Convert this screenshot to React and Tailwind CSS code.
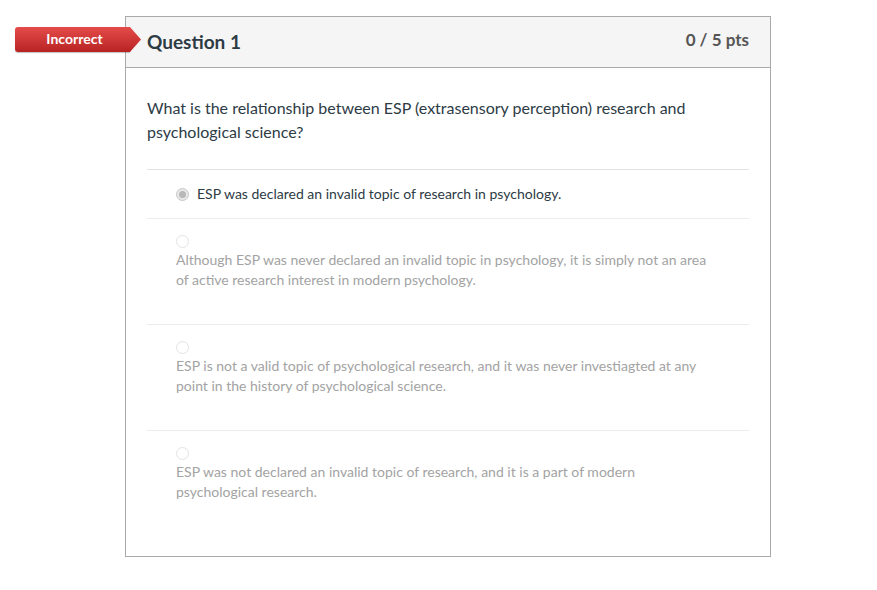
import React from 'react';

const answers = [
    'Although ESP was never declared an invalid topic in psychology, it is simply not an area of active research interest in modern psychology.',
    'ESP is not a valid topic of psychological research, and it was never investiagted at any point in the history of psychological science.',
    'ESP was not declared an invalid topic of research, and it is a part of modern psychological research.',
];

const Radio = ({ checked }) => (
    <span
        className={`flex w-[13px] h-[13px] rounded-full border shrink-0 items-center justify-center ${checked ? 'border-[#c8c8c8] bg-[#e8e8e8]' : 'border-[#e3e3e3] bg-white'}`}
    >
        {checked && <span className="block w-[7px] h-[7px] rounded-full bg-[#b8b8b8]" />}
    </span>
);

const App = () => {
    return (
        <div className="min-h-[590px] bg-white pt-[16px] pl-[125px]" style={{ fontFamily: 'Lato, "Noto Sans", sans-serif' }}>
            <div className="relative w-[646px] h-[541px] border border-[#aaaaaa]">
                {/* Incorrect badge */}
                <div className="absolute left-[-111px] top-[10px] flex items-center">
                    <div className="w-[115px] h-[25px] rounded-l-[3px] bg-gradient-to-b from-[#e54b4b] to-[#b82222] flex items-center justify-center text-white text-[14px] leading-[18px] pb-[2px] pl-[4px] font-bold shadow-[0_1px_1px_rgba(0,0,0,0.25)]">
                        Incorrect
                    </div>
                    <svg width="11" height="25" viewBox="0 0 11 25" className="block">
                        <defs>
                            <linearGradient id="g" x1="0" y1="0" x2="0" y2="1">
                                <stop offset="0" stopColor="#e54b4b" />
                                <stop offset="1" stopColor="#b82222" />
                            </linearGradient>
                        </defs>
                        <polygon points="0,0 11,12.5 0,25" fill="url(#g)" />
                    </svg>
                </div>

                {/* Header */}
                <div className="h-[51px] bg-[#f5f5f5] border-b border-[#aaaaaa] flex items-start justify-between px-[21px]">
                    <h2 className="text-[19px] font-bold text-[#2d3b45] mt-[12px] leading-[26px]">Question 1</h2>
                    <div className="text-[17px] font-bold text-[#555555] mt-[11px] leading-[24px]">0 / 5 pts</div>
                </div>

                {/* Body */}
                <div className="px-[21px] pt-[28px]">
                    <p className="text-[16px] leading-[24px] text-[#2d3b45]">
                        What is the relationship between ESP (extrasensory perception) research and psychological science?
                    </p>

                    <div className="mt-[25px] border-t border-[#e2e2e2]">
                        <div className="h-[49px] border-b border-[#ececec] flex items-center gap-[8px] pl-[29px]">
                            <Radio checked />
                            <span className="text-[14px] text-[#2d3b45] -mt-[1px]">ESP was declared an invalid topic of research in psychology.</span>
                        </div>
                        {answers.map((a, i) => (
                            <div
                                key={i}
                                className={`pt-[16px] pb-[34px] pl-[29px] pr-[40px] ${i < answers.length - 1 ? 'border-b border-[#ececec]' : ''}`}
                            >
                                <Radio />
                                <p className="mt-[2px] text-[14px] leading-[20px] text-[#a3a3a3]">{a}</p>
                            </div>
                        ))}
                    </div>
                </div>
            </div>
        </div>
    );
};

export default App;
